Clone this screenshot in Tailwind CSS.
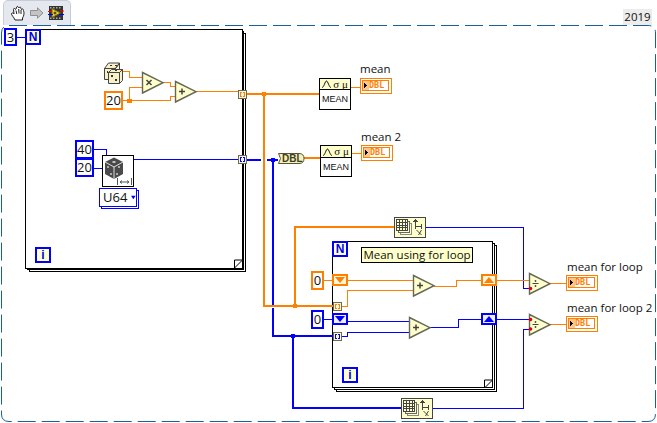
<!DOCTYPE html>
<html>
<head>
<meta charset="utf-8">
<script src="https://cdn.jsdelivr.net/npm/@tailwindcss/browser@4"></script>
</head>
<body class="bg-white">
<div class="relative w-[657px] h-[423px] bg-white overflow-hidden font-['Open_Sans',sans-serif] text-[11.5px] text-[#111]">

<!-- wiring layer -->
<svg class="absolute inset-0" width="657" height="423" viewBox="0 0 657 423" fill="none" shape-rendering="crispEdges">
  <defs>
    <symbol id="arr" viewBox="0 0 32 20" overflow="visible">
      <rect x="0.5" y="0.5" width="31" height="19.5" fill="#ffffcc" stroke="#444"/>
      <g stroke="#444" fill="#ffffcc">
        <rect x="6.5" y="6.5" width="11" height="11" stroke="#888"/>
        <rect x="4.5" y="4.5" width="11" height="11" stroke="#666"/>
        <rect x="2.5" y="2.5" width="11" height="11"/>
        <path d="M5.500 3v10M8.500 3v10M11 3v10M3 5.500h10M3 8h10M3 10.500h10" fill="none"/>
      </g>
      <g stroke="#444" fill="none">
        <path d="M21.500 3v9M19.500 5l2-2 2 2"/>
        <path d="M21.500 9.500h6M27.500 7v5"/>
        <path d="M22.500 13l5 5M27.500 13l-3 5" shape-rendering="geometricPrecision"/>
      </g>
    </symbol>
    <symbol id="dbl" viewBox="0 0 32 16" overflow="visible">
      <rect x="0.5" y="0.500" width="31" height="15" fill="#fff" stroke="#ff8000"/>
      <rect x="2.500" y="2.500" width="26" height="10" fill="#fff" stroke="#ff8000"/>
      <rect x="3" y="3" width="6" height="9" fill="#f8c593"/>
      <path d="M4 5v5l3-2.500z" fill="#000" stroke="none"/>
    </symbol>
    <symbol id="tun" viewBox="0 0 9 9" overflow="visible">
      <rect x="0.500" y="0.500" width="8" height="8" fill="#f8f6dc" stroke="#6b6b50"/>
    </symbol>
  </defs>

  <!-- outer dashed frame -->
  <path d="M9 25.500H648Q655.500 25.500 655.500 33V414Q655.500 421.500 648 421.500H9Q1.500 421.500 1.500 414V33Q1.500 25.500 9 25.500Z" stroke="#1a6096" stroke-width="1" stroke-dasharray="18 6" shape-rendering="geometricPrecision"/>

  <!-- loop one -->
  <rect x="29.500" y="33.500" width="216" height="238" fill="#fff" stroke="#000"/>
  <rect x="27.500" y="31.500" width="216" height="238" fill="#fff" stroke="#000"/>
  <rect x="25.500" y="29.500" width="217" height="238.500" fill="#fff" stroke="#000"/>
  <path d="M234.500 268l8-8h-8z" fill="#fff" stroke="#000" shape-rendering="geometricPrecision"/>

  <!-- loop two -->
  <rect x="336.500" y="245.500" width="160" height="146" fill="#fff" stroke="#000"/>
  <rect x="334.500" y="243.500" width="160" height="146" fill="#fff" stroke="#000"/>
  <rect x="332.500" y="241.500" width="160" height="146" fill="#fff" stroke="#000"/>
  <path d="M484.500 388l8-8h-8z" fill="#fff" stroke="#000" shape-rendering="geometricPrecision"/>

  <!-- thin blue wires -->
  <g stroke="#0000ff" stroke-width="1">
    <path d="M17 37.500H25M94 149.500H106.500V155M94 168.500H102M134 159.500H238"/>
    <path d="M426 227.500H523.500V288.500H530"/>
    <path d="M432 408.500H523.500V329.500H530"/>
    <path d="M324 319.500H332M347 321.500H409M341 336.500H347.500V332.500H409M430 327.500H458.500V319.500H481M497 319.500H530"/>
  </g>

  <!-- thin orange wires -->
  <g stroke="#ff8000" stroke-width="1">
    <path d="M123 71.500H129.500V77.500H142M163 82.500H170.500V86.500H175M123 100.500H170.500V96.500H175M129.500 100V87.500H142"/>
    <path d="M196 91.500H238M351 87.500H360M352 153.500H361"/>
    <path d="M324 280.500H332M347 280.500H413M341 306.500H347.500V290.500H413M434 286.500H456.500V280.500H481M497 280.500H530"/>
    <path d="M550 283.500H566M550 324.500H566"/>
  </g>

  <!-- thick blue wires -->
  <path d="M246 160H261M267 160H278M273 160V305M273 308V336H333M293 336V408H402" stroke="#0000ff" stroke-width="2"/>
  <!-- thick orange wires -->
  <path d="M246 94H320M264 94V306H333M295 306V227H394" stroke="#ff8000" stroke-width="2"/>
  <path d="M303 158H320" stroke="#ff8000" stroke-width="2"/>

  <!-- junctions -->
  <g>
    <rect x="127" y="98.500" width="5" height="4" fill="#ff8000"/>
    <rect x="262" y="92" width="4" height="4" fill="#ff8000"/>
    <rect x="293" y="304" width="4" height="4" fill="#ff8000"/>
    <rect x="271" y="158" width="4" height="4" fill="#0000ff"/>
    <rect x="291" y="334" width="4" height="4" fill="#0000ff"/>
  </g>

  <!-- tunnels -->
  <use href="#tun" x="238" y="90" width="9" height="9"/>
  <use href="#tun" x="238" y="155" width="9" height="9"/>
  <use href="#tun" x="333" y="302" width="9" height="9"/>
  <use href="#tun" x="333" y="332" width="9" height="9"/>
  <g stroke-width="1">
    <path d="M242 92.500h-1.500v4h1.500M243 92.500h1.500v4h-1.500" stroke="#ff8000"/>
    <path d="M242 157.500h-1.500v4h1.500M243 157.500h1.500v4h-1.500" stroke="#0000ff"/>
    <path d="M337 304.500h-1.500v4h1.500M338 304.500h1.500v4h-1.500" stroke="#ff8000"/>
    <path d="M337 334.500h-1.500v4h1.500M338 334.500h1.500v4h-1.500" stroke="#0000ff"/>
  </g>

  <!-- triangles -->
  <g fill="#ffffcc" stroke="#666655" stroke-width="1.400" stroke-linejoin="miter" shape-rendering="geometricPrecision">
    <path d="M142.500 72.500V93L163 82.700Z"/>
    <path d="M175.500 81.500V102L196 91.700Z"/>
    <path d="M413.500 275.500V296L434 285.700Z"/>
    <path d="M409.500 317.500V338L430 327.700Z"/>
    <path d="M529.500 273.500V294L550 283.700Z"/>
    <path d="M529.500 314.500V335L550 324.700Z"/>
  </g>
  <g stroke="#444" stroke-width="1.500" shape-rendering="geometricPrecision">
    <path d="M146.500 80L151.500 85M151.500 80L146.500 85"/>
    <path d="M179 91.500H185M182 88.500V94.500"/>
    <path d="M417 285.500H423M420 282.500V288.500"/>
    <path d="M413 327.500H419M416 324.500V330.500"/>
    <path d="M532.500 283.500H538.500M532.500 324.500H538.500" stroke-width="1"/>
  </g>
  <g fill="#444" shape-rendering="geometricPrecision">
    <circle cx="535.500" cy="281" r="0.900"/><circle cx="535.500" cy="286" r="0.900"/>
    <circle cx="535.500" cy="322" r="0.900"/><circle cx="535.500" cy="327" r="0.900"/>
  </g>
  <g fill="#e00000" shape-rendering="geometricPrecision">
    <circle cx="530.500" cy="288.500" r="1.800"/>
    <circle cx="530.500" cy="319.500" r="1.800"/>
    <circle cx="530.500" cy="329" r="1.800"/>
  </g>

  <!-- array-size nodes -->
  <use href="#arr" x="394" y="217" width="32" height="20"/>
  <use href="#arr" x="401" y="398" width="32" height="20"/>

  <!-- indicators -->
  <use href="#dbl" x="360" y="78" width="32" height="16"/>
  <use href="#dbl" x="361" y="145" width="32" height="16"/>
  <use href="#dbl" x="566" y="275" width="32" height="16"/>
  <use href="#dbl" x="566" y="316" width="32" height="16"/>

  <!-- coercion node -->
  <path d="M278.500 153.500H299Q304 153.500 304 158.500T299 163.500H278.500L280.500 158.500Z" fill="#f6f1b8" stroke="#55553a" shape-rendering="geometricPrecision"/>

  <!-- light dice -->
  <g stroke="#444" fill="#f7f1c8" stroke-width="1">
    <path d="M104.500 68.500h11v11h-11zM104.500 68.500l4-5.500h11l-4 5.500zM115.500 68.500l4-5.500v7" shape-rendering="geometricPrecision"/>
    <path d="M108.500 72.500h11v11h-11zM108.500 72.500l3-3h11l-3 3zM119.500 72.500l3-3v11l-3 3z" shape-rendering="geometricPrecision"/>
  </g>
  <g fill="#333">
    <rect x="111" y="75" width="2" height="2"/><rect x="115" y="79" width="2" height="2"/>
    <rect x="107" y="71" width="1" height="2"/>
    <rect x="110" y="65" width="2" height="1"/><rect x="115" y="65" width="2" height="1"/>
    <rect x="115" y="70" width="2" height="1"/>
  </g>
</svg>

<!-- toolbar tab -->
<div class="absolute left-[3px] top-0 w-[68px] h-[25px] bg-[#e6e8ef] border border-[#c6ccd8] border-b-0 rounded-t-[5px] flex items-center gap-[4px] pl-[6px]">
  <svg width="16" height="16" viewBox="0 0 16 16" fill="#fff" stroke="#222" stroke-width="1" stroke-linejoin="round">
    <path d="M5 15C4 12 1 10 1.500 8.500C2 7.500 3.500 8 4 9L3.500 4.500C3.500 3 5 3 5.500 4.500L6.500 3C6.500 1 8 1 8.500 2.500L9 3C9.500 1.500 11 2 11 3.500L11.500 4.500C12 3.500 13.500 3.800 13.500 5.500C14.500 7.500 14 11 12.500 13L12.500 15Z"/>
    <path d="M6 5.500L6.800 9M8.700 4L9 8.500M11 5L11 9" fill="none"/>
  </svg>
  <svg width="14" height="12" viewBox="0 0 14 12" fill="#c4c4c4" stroke="#909090"><path d="M0.500 3.500H7.500V0.800L13 6L7.500 11.200V8.500H0.500Z"/></svg>
  <svg width="16" height="16" viewBox="0 0 16 16">
    <rect x="1" y="1" width="14" height="14" fill="#333"/>
    <path d="M2 2h1.500v1.500H2zM5 2h1.500v1.500H5zM8 2h1.500v1.500H8zM11 2h1.500v1.500H11zM2 12.500h1.500V14H2zM5 12.500h1.500V14H5zM8 12.500h1.500V14H8zM11 12.500h1.500V14H11z" fill="#aaa"/>
    <path d="M4 3.500V12.500L12.500 8Z" fill="#f2d21f" stroke="#6a6a10"/>
    <path d="M0 6.500H4M12 6H16" stroke="#f00"/>
    <path d="M0 9.500H5M11 9.500H16" stroke="#00f"/>
    <path d="M5.500 8h3M7 6.500v3" stroke="#222"/>
  </svg>
</div>

<!-- version -->
<div class="absolute left-[623px] top-[9px] w-[29px] h-[16px] bg-[#ececec] text-center leading-[16px]">2019</div>

<!-- constants, iteration terminals -->
<div class="absolute left-[4px] top-[28px] w-[13px] h-[18px] border-2 border-[#0000ff] bg-white text-center leading-[14px] text-[13px]">3</div>
<div class="absolute left-[25px] top-[29px] w-[16px] h-[16px] border-2 border-[#0000ff] bg-[#ffffcc] text-center leading-[12px] font-['Liberation_Sans'] font-bold text-[12px] text-[#0000ff]">N</div>
<div class="absolute left-[104px] top-[91px] w-[19px] h-[19px] border-2 border-[#ff8000] bg-white text-center leading-[15px] text-[13px]">20</div>
<div class="absolute left-[75px] top-[140px] w-[19px] h-[19px] border-2 border-[#0000ff] bg-white text-center leading-[15px] text-[13px]">40</div>
<div class="absolute left-[75px] top-[158px] w-[19px] h-[19px] border-2 border-[#0000ff] bg-white text-center leading-[15px] text-[13px]">20</div>
<div class="absolute left-[35px] top-[247px] w-[16px] h-[16px] border-2 border-[#0000ff] bg-[#ffffcc] text-center leading-[12px] font-['Liberation_Sans'] font-bold text-[12px] text-[#0000ff]">i</div>

<!-- random number -->
<div class="absolute left-[102px] top-[155px] w-[32px] h-[32px] border border-black bg-white">
  <svg width="30" height="30" viewBox="0 0 30 30">
    <path d="M2 6L11 1.500L20 6V18L11 23L2 18Z" fill="#4a4a4a"/>
    <path d="M2 6L11 11L20 6M11 11V23" stroke="#ddd" fill="none"/>
    <g fill="#ccc"><ellipse cx="11" cy="6" rx="1.800" ry="1"/><circle cx="5" cy="11" r="1"/><circle cx="8" cy="18" r="1"/><circle cx="16" cy="11" r="1"/><circle cx="14" cy="18" r="1"/></g>
    <path d="M14.500 22V29M28.500 22V29M17 26H26M17 26l2-1.500M17 26l2 1.500M26 26l-2-1.500M26 26l-2 1.500" stroke="#555" fill="none"/>
  </svg>
</div>
<div class="absolute left-[101px] top-[190px] w-[38px] h-[19px] border border-[#0000ff] bg-white"></div>
<div class="absolute left-[99px] top-[188px] w-[38px] h-[19px] border border-[#0000ff] bg-white flex items-center pl-[3px] gap-[4px] text-[13px] leading-none">U64
  <svg width="7" height="5" viewBox="0 0 7 5"><path d="M0 0H7L3.500 5Z" fill="#0000ff"/></svg>
</div>

<!-- MEAN blocks -->
<div class="absolute left-[319px] top-[78px] w-[32px] h-[32px] border border-black bg-white flex flex-col font-['Liberation_Sans'] text-[9px] text-center leading-none">
  <div class="h-[11px] border-b border-black bg-[#ffffcc] flex items-center justify-center gap-[2px] font-['Liberation_Serif'] text-[11px]">
    <svg width="9" height="8" viewBox="0 0 9 8" fill="none" stroke="#111"><path d="M0 7.500C2 7.500 3 1 4.500 1S7 7.500 9 7.500"/></svg>σ μ
  </div>
  <div class="flex-1 flex items-center justify-center">MEAN</div>
</div>
<div class="absolute left-[320px] top-[145px] w-[32px] h-[32px] border border-black bg-white flex flex-col font-['Liberation_Sans'] text-[9px] text-center leading-none">
  <div class="h-[12px] border-b border-black bg-[#ffffcc] flex items-center justify-center gap-[2px] font-['Liberation_Serif'] text-[11px]">
    <svg width="9" height="8" viewBox="0 0 9 8" fill="none" stroke="#111"><path d="M0 7.500C2 7.500 3 1 4.500 1S7 7.500 9 7.500"/></svg>σ μ
  </div>
  <div class="flex-1 flex items-center justify-center">MEAN</div>
</div>

<!-- indicator text -->
<div class="absolute left-[369px] top-[80px] font-['DejaVu_Sans_Mono'] font-bold text-[8.500px] leading-[11px] text-[#ff8000]">DBL</div>
<div class="absolute left-[370px] top-[147px] font-['DejaVu_Sans_Mono'] font-bold text-[8.500px] leading-[11px] text-[#ff8000]">DBL</div>
<div class="absolute left-[575px] top-[277px] font-['DejaVu_Sans_Mono'] font-bold text-[8.500px] leading-[11px] text-[#ff8000]">DBL</div>
<div class="absolute left-[575px] top-[318px] font-['DejaVu_Sans_Mono'] font-bold text-[8.500px] leading-[11px] text-[#ff8000]">DBL</div>
<div class="absolute left-[282px] top-[153px] font-['Liberation_Sans'] font-bold text-[10px] leading-[11px] text-[#3f3f25]">DBL</div>

<!-- labels -->
<div class="absolute left-[360px] top-[61px] leading-[16px]">mean</div>
<div class="absolute left-[361px] top-[129px] leading-[16px]">mean 2</div>
<div class="absolute left-[567px] top-[259px] leading-[16px] whitespace-nowrap">mean for loop</div>
<div class="absolute left-[567px] top-[300px] leading-[16px] whitespace-nowrap">mean for loop 2</div>

<!-- loop two parts -->
<div class="absolute left-[332px] top-[241px] w-[16px] h-[16px] border-2 border-[#0000ff] bg-[#ffffcc] text-center leading-[12px] font-['Liberation_Sans'] font-bold text-[12px] text-[#0000ff]">N</div>
<div class="absolute left-[342px] top-[367px] w-[16px] h-[16px] border-2 border-[#0000ff] bg-[#ffffcc] text-center leading-[12px] font-['Liberation_Sans'] font-bold text-[12px] text-[#0000ff]">i</div>
<div class="absolute left-[361px] top-[247px] w-[112px] h-[16px] border border-black bg-[#ffffcc] text-center leading-[14px] whitespace-nowrap">Mean using for loop</div>
<div class="absolute left-[311px] top-[271px] w-[13px] h-[19px] border-2 border-[#ff8000] bg-white text-center leading-[15px] text-[13px]">0</div>
<div class="absolute left-[311px] top-[310px] w-[13px] h-[19px] border-2 border-[#0000ff] bg-white text-center leading-[15px] text-[13px]">0</div>

<!-- shift registers -->
<div class="absolute left-[332px] top-[274px] w-[16px] h-[12px] border-2 border-[#ff8000] bg-[#fff6dc] flex items-center justify-center"><svg width="10" height="6" viewBox="0 0 10 6"><path d="M0 0H10L5 6Z" fill="#ff8000"/></svg></div>
<div class="absolute left-[332px] top-[313px] w-[16px] h-[12px] border-2 border-[#0000ff] bg-[#eef] flex items-center justify-center"><svg width="10" height="6" viewBox="0 0 10 6"><path d="M0 0H10L5 6Z" fill="#0000ff"/></svg></div>
<div class="absolute left-[481px] top-[274px] w-[16px] h-[12px] border-2 border-[#ff8000] bg-[#fff6dc] flex items-center justify-center"><svg width="10" height="6" viewBox="0 0 10 6"><path d="M0 6H10L5 0Z" fill="#ff8000"/></svg></div>
<div class="absolute left-[481px] top-[313px] w-[16px] h-[12px] border-2 border-[#0000ff] bg-[#eef] flex items-center justify-center"><svg width="10" height="6" viewBox="0 0 10 6"><path d="M0 6H10L5 0Z" fill="#0000ff"/></svg></div>

</div>
</body>
</html>
